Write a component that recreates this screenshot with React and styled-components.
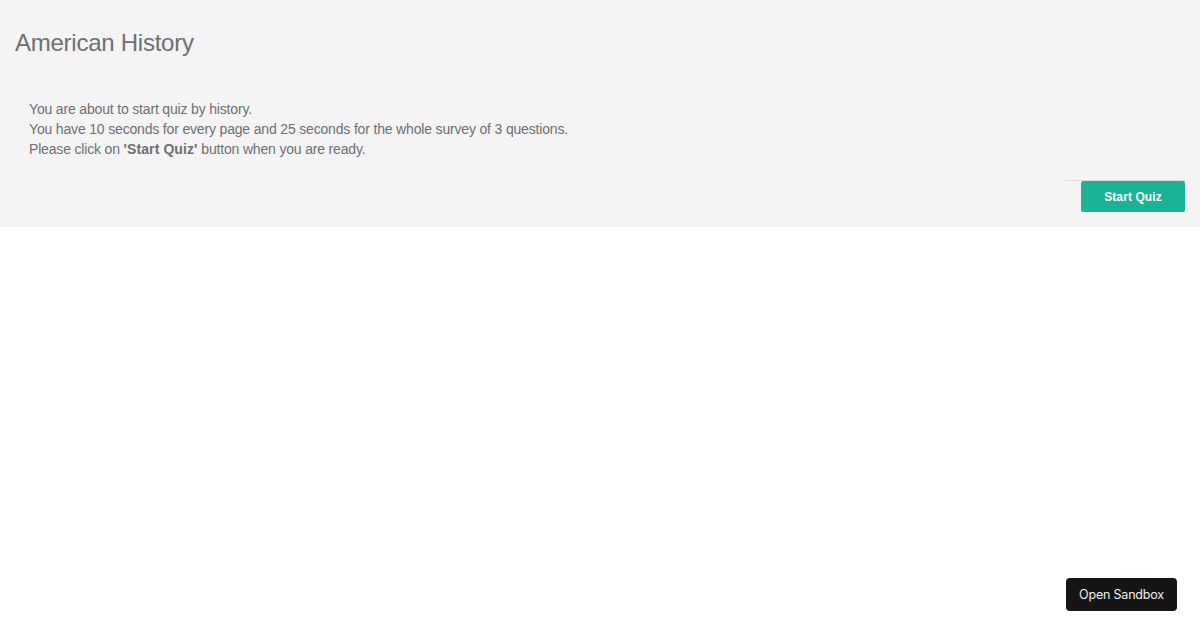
import React from "react";
import styled, { createGlobalStyle } from "styled-components";

const GlobalStyle = createGlobalStyle`
  html, body {
    margin: 0;
    padding: 0;
    background: #fff;
    font-family: "Liberation Sans", Arial, sans-serif;
  }
`;

const Survey = styled.div`
  background: #f4f4f4;
  color: #6d7072;
  padding: 0 15px 15px 15px;
`;

const Header = styled.h3`
  margin: 0;
  padding: 28px 0 0 0;
  font-size: 24px;
  font-weight: 400;
  line-height: 29px;
  letter-spacing: -0.25px;
  color: #6d7072;
`;

const Body = styled.div`
  padding: 42px 14px 0 14px;
  font-size: 14px;
  line-height: 20px;
  letter-spacing: -0.17px;
`;

const Line = styled.div`
  b {
    font-weight: 700;
    letter-spacing: 0.1px;
  }
`;

const Nav = styled.div`
  display: flex;
  justify-content: flex-end;
  margin-top: 21px;
`;

const NavSlot = styled.div`
  display: flex;
  border-top: 1px solid #d9d9d9;
  padding-left: 16px;
`;

const Button = styled.button`
  width: 104px;
  height: 31px;
  border: none;
  border-radius: 2px;
  background: #1ab394;
  color: #fff;
  font-family: "Liberation Sans", Arial, sans-serif;
  font-size: 12px;
  font-weight: 700;
  letter-spacing: 0.1px;
  cursor: pointer;
`;

const SandboxButton = styled.button`
  position: fixed;
  right: 23px;
  bottom: 19px;
  width: 111px;
  height: 33px;
  border: none;
  border-radius: 4px;
  background: #151515;
  color: #f0f0f0;
  font-family: Inter, "Liberation Sans", sans-serif;
  font-size: 12.5px;
  letter-spacing: -0.2px;
  cursor: pointer;
`;

export default function App() {
  return (
    <>
      <GlobalStyle />
      <Survey>
        <Header>American History</Header>
        <Body>
          <Line>You are about to start quiz by history.</Line>
          <Line>You have 10 seconds for every page and 25 seconds for the whole survey of 3 questions.</Line>
          <Line>
            Please click on <b>'Start Quiz'</b> button when you are ready.
          </Line>
        </Body>
        <Nav>
          <NavSlot>
            <Button>Start Quiz</Button>
          </NavSlot>
        </Nav>
      </Survey>
      <SandboxButton>Open Sandbox</SandboxButton>
    </>
  );
}
